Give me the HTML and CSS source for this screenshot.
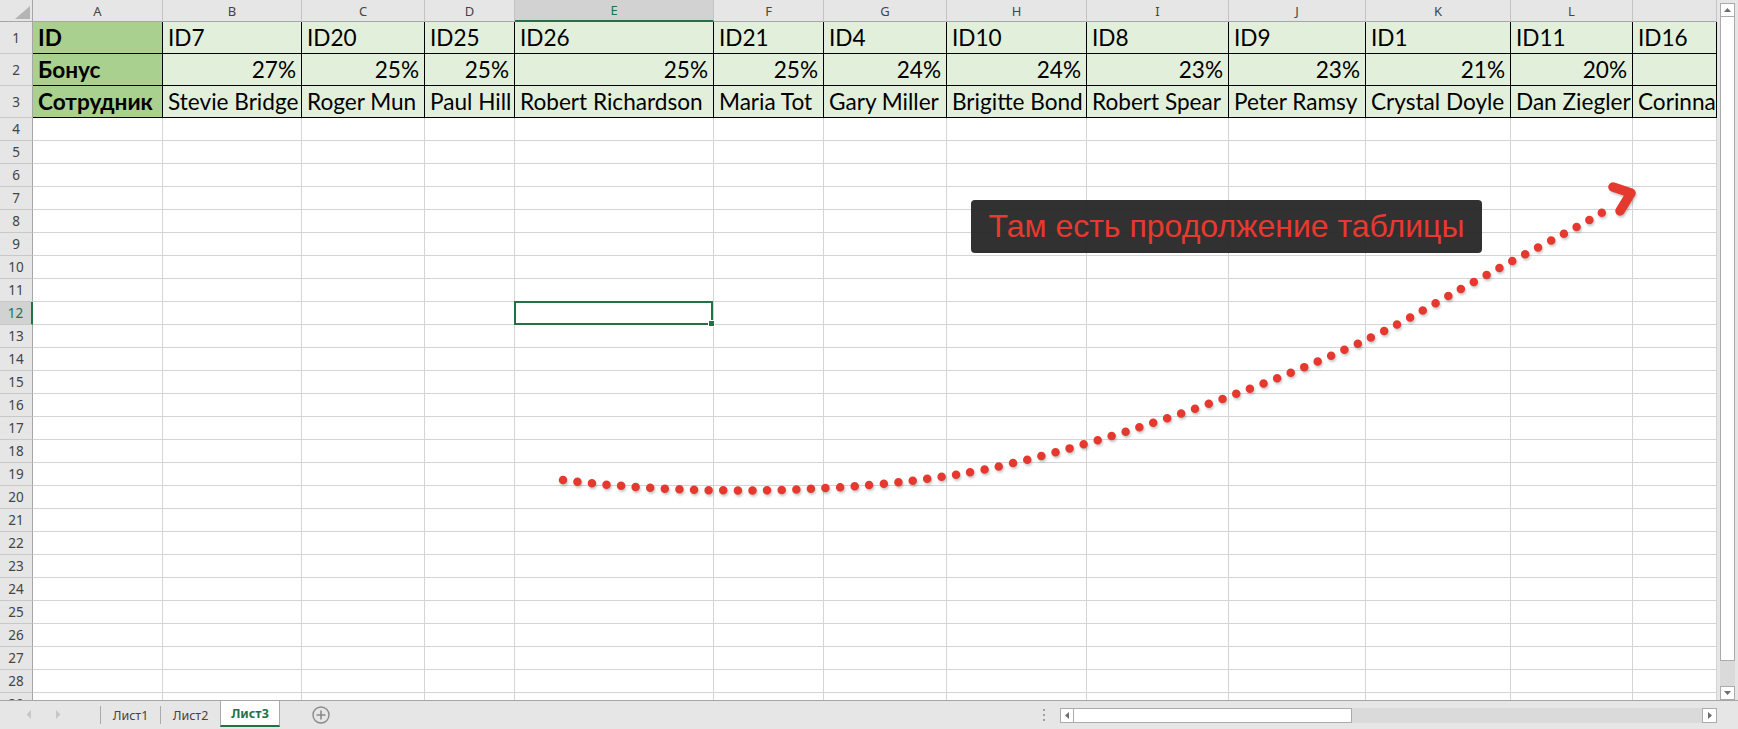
FILE: index.html
```html
<!DOCTYPE html>
<html lang="ru">
<head>
<meta charset="utf-8">
<title>Лист3</title>
<link rel="stylesheet" href="styles.css">
</head>
<body>
<div class="app">
  <div class="main">
    <div class="sheet">
      <div class="corner"><svg width="33" height="22" viewBox="0 0 33 22"><polygon points="15,19 30,19 30,6" fill="#b4b4b4"/></svg></div>
      <div class="ch">A</div><div class="ch">B</div><div class="ch">C</div><div class="ch">D</div><div class="ch on">E</div><div class="ch">F</div><div class="ch">G</div><div class="ch">H</div><div class="ch">I</div><div class="ch">J</div><div class="ch">K</div><div class="ch">L</div><div class="ch"></div>

      <div class="rh">1</div>
      <div class="c key">ID</div><div class="c">ID7</div><div class="c">ID20</div><div class="c">ID25</div><div class="c">ID26</div><div class="c">ID21</div><div class="c">ID4</div><div class="c">ID10</div><div class="c">ID8</div><div class="c">ID9</div><div class="c">ID1</div><div class="c">ID11</div><div class="c">ID16</div>

      <div class="rh">2</div>
      <div class="c key">Бонус</div><div class="c num">27%</div><div class="c num">25%</div><div class="c num">25%</div><div class="c num">25%</div><div class="c num">25%</div><div class="c num">24%</div><div class="c num">24%</div><div class="c num">23%</div><div class="c num">23%</div><div class="c num">21%</div><div class="c num">20%</div><div class="c num"></div>

      <div class="rh">3</div>
      <div class="c key">Сотрудник</div><div class="c">Stevie Bridge</div><div class="c">Roger Mun</div><div class="c">Paul Hill</div><div class="c">Robert Richardson</div><div class="c">Maria Tot</div><div class="c">Gary Miller</div><div class="c">Brigitte Bond</div><div class="c">Robert Spear</div><div class="c">Peter Ramsy</div><div class="c">Crystal Doyle</div><div class="c">Dan Ziegler</div><div class="c">Corinna</div>

      <div class="rh">4</div><div></div><div></div><div></div><div></div><div></div><div></div><div></div><div></div><div></div><div></div><div></div><div></div><div></div>
      <div class="rh">5</div><div></div><div></div><div></div><div></div><div></div><div></div><div></div><div></div><div></div><div></div><div></div><div></div><div></div>
      <div class="rh">6</div><div></div><div></div><div></div><div></div><div></div><div></div><div></div><div></div><div></div><div></div><div></div><div></div><div></div>
      <div class="rh">7</div><div></div><div></div><div></div><div></div><div></div><div></div><div></div><div></div><div></div><div></div><div></div><div></div><div></div>
      <div class="rh">8</div><div></div><div></div><div></div><div></div><div></div><div></div><div></div><div></div><div></div><div></div><div></div><div></div><div></div>
      <div class="rh">9</div><div></div><div></div><div></div><div></div><div></div><div></div><div></div><div></div><div></div><div></div><div></div><div></div><div></div>
      <div class="rh">10</div><div></div><div></div><div></div><div></div><div></div><div></div><div></div><div></div><div></div><div></div><div></div><div></div><div></div>
      <div class="rh">11</div><div></div><div></div><div></div><div></div><div></div><div></div><div></div><div></div><div></div><div></div><div></div><div></div><div></div>
      <div class="rh on">12</div><div></div><div></div><div></div><div></div><div class="cur"><span class="cursor"><span class="handle"></span></span></div><div></div><div></div><div></div><div></div><div></div><div></div><div></div><div></div>
      <div class="rh">13</div><div></div><div></div><div></div><div></div><div></div><div></div><div></div><div></div><div></div><div></div><div></div><div></div><div></div>
      <div class="rh">14</div><div></div><div></div><div></div><div></div><div></div><div></div><div></div><div></div><div></div><div></div><div></div><div></div><div></div>
      <div class="rh">15</div><div></div><div></div><div></div><div></div><div></div><div></div><div></div><div></div><div></div><div></div><div></div><div></div><div></div>
      <div class="rh">16</div><div></div><div></div><div></div><div></div><div></div><div></div><div></div><div></div><div></div><div></div><div></div><div></div><div></div>
      <div class="rh">17</div><div></div><div></div><div></div><div></div><div></div><div></div><div></div><div></div><div></div><div></div><div></div><div></div><div></div>
      <div class="rh">18</div><div></div><div></div><div></div><div></div><div></div><div></div><div></div><div></div><div></div><div></div><div></div><div></div><div></div>
      <div class="rh">19</div><div></div><div></div><div></div><div></div><div></div><div></div><div></div><div></div><div></div><div></div><div></div><div></div><div></div>
      <div class="rh">20</div><div></div><div></div><div></div><div></div><div></div><div></div><div></div><div></div><div></div><div></div><div></div><div></div><div></div>
      <div class="rh">21</div><div></div><div></div><div></div><div></div><div></div><div></div><div></div><div></div><div></div><div></div><div></div><div></div><div></div>
      <div class="rh">22</div><div></div><div></div><div></div><div></div><div></div><div></div><div></div><div></div><div></div><div></div><div></div><div></div><div></div>
      <div class="rh">23</div><div></div><div></div><div></div><div></div><div></div><div></div><div></div><div></div><div></div><div></div><div></div><div></div><div></div>
      <div class="rh">24</div><div></div><div></div><div></div><div></div><div></div><div></div><div></div><div></div><div></div><div></div><div></div><div></div><div></div>
      <div class="rh">25</div><div></div><div></div><div></div><div></div><div></div><div></div><div></div><div></div><div></div><div></div><div></div><div></div><div></div>
      <div class="rh">26</div><div></div><div></div><div></div><div></div><div></div><div></div><div></div><div></div><div></div><div></div><div></div><div></div><div></div>
      <div class="rh">27</div><div></div><div></div><div></div><div></div><div></div><div></div><div></div><div></div><div></div><div></div><div></div><div></div><div></div>
      <div class="rh">28</div><div></div><div></div><div></div><div></div><div></div><div></div><div></div><div></div><div></div><div></div><div></div><div></div><div></div>
      <div class="rh">29</div><div></div><div></div><div></div><div></div><div></div><div></div><div></div><div></div><div></div><div></div><div></div><div></div><div></div>
    </div>
    <div class="vscroll">
      <div class="vbtn"><svg width="13" height="12" viewBox="0 0 13 12"><polygon points="3,8 10,8 6.5,4" fill="#6d6d6d"/></svg></div>
      <div class="vthumb"></div>
      <div class="vtrack"></div>
      <div class="vbtn"><svg width="13" height="12" viewBox="0 0 13 12"><polygon points="3,4 10,4 6.5,8" fill="#6d6d6d"/></svg></div>
    </div>
  </div>
  <div class="bottom">
    <div class="nav">
      <svg width="100" height="28" viewBox="0 0 100 28"><polygon points="31,9 31,18 26.5,13.5" fill="#c6c6c6"/><polygon points="56,9 56,18 60.5,13.5" fill="#c6c6c6"/></svg>
    </div>
    <div class="tab">Лист1</div>
    <div class="tab">Лист2</div>
    <div class="tab active">Лист3</div>
    <div class="add"><svg width="20" height="20" viewBox="0 0 20 20"><circle cx="10" cy="10" r="8" fill="none" stroke="#8a8a8a" stroke-width="1.4"/><path d="M10 5.5v9M5.5 10h9" stroke="#8a8a8a" stroke-width="1.6"/></svg></div>
    <div class="hscroll">
      <div class="split"><svg width="16" height="16" viewBox="0 0 16 16"><rect x="7" y="2" width="2" height="2" fill="#a0a0a0"/><rect x="7" y="7" width="2" height="2" fill="#a0a0a0"/><rect x="7" y="12" width="2" height="2" fill="#a0a0a0"/></svg></div>
      <div class="hbtn"><svg width="12" height="13" viewBox="0 0 12 13"><polygon points="8,3 8,10 4,6.5" fill="#6d6d6d"/></svg></div>
      <div class="hthumb"></div>
      <div class="htrack"></div>
      <div class="hbtn right"><svg width="13" height="13" viewBox="0 0 13 13"><polygon points="5,3 5,10 9,6.5" fill="#6d6d6d"/></svg></div>
    </div>
  </div>
  <div class="callout">Там есть продолжение таблицы</div>
  <svg class="arrow" width="1738" height="729" viewBox="0 0 1738 729">
    <path class="dots" d="M563,480 C700,497 850,492 960,474 S1300,380 1420,312 S1560,238 1608,209"/>
    <path class="head" d="M1613,187 L1631,193 L1620,211"/>
  </svg>
</div>
</body>
</html>
```

FILE: styles.css
```css
* { box-sizing: border-box; }
html, body { margin: 0; padding: 0; }
body {
  width: 1738px;
  height: 729px;
  overflow: hidden;
  background: #ffffff;
  font-family: Lato, "Noto Sans", sans-serif;
  color: #000;
}
.app { position: relative; width: 1738px; height: 729px; }
.main { display: flex; height: 700px; }

.sheet {
  display: grid;
  grid-template-columns: 33px 130px 139px 123px 90px 199px 110px 123px 140px 142px 137px 145px 122px 84px;
  grid-template-rows: 22px 32px 32px 32px;
  grid-auto-rows: 23px;
  width: 1717px;
  height: 700px;
  overflow: hidden;
}
.sheet > div {
  border-right: 1px solid #d4d4d4;
  border-bottom: 1px solid #d4d4d4;
}
.sheet > .corner {
  background: #e6e6e6;
  border-right-color: #a6a6a6;
  border-bottom-color: #a6a6a6;
}
.corner svg { display: block; }
.sheet > .ch {
  background: #e6e6e6;
  border-right-color: #c4c4c4;
  border-bottom-color: #a6a6a6;
  font-family: "Noto Sans", sans-serif;
  font-size: 13px;
  color: #444;
  display: flex;
  align-items: center;
  justify-content: center;
}
.sheet > .ch.on {
  background: #d2d2d2;
  color: #217346;
  border-bottom: 2px solid #217346;
}
.sheet > .rh {
  background: #e6e6e6;
  border-right-color: #a6a6a6;
  border-bottom-color: #c8c8c8;
  font-family: "Noto Sans", sans-serif;
  font-size: 13.5px;
  color: #444;
  display: flex;
  align-items: center;
  justify-content: center;
}
.sheet > .rh.on {
  background: #d2d2d2;
  color: #217346;
  border-right: 2px solid #217346;
}
.sheet > .c {
  background: #e2efda;
  border-right-color: #000;
  border-bottom-color: #000;
  display: flex;
  align-items: flex-end;
  padding: 0 5px 4px 5px;
  font-size: 22.6px;
  line-height: 22px;
  white-space: nowrap;
  overflow: hidden;
}
.sheet > .c.key { background: #a9d08e; font-weight: 700; }
.sheet > .c.num { justify-content: flex-end; }

.cur { position: relative; }
.cursor {
  position: absolute;
  left: -1px;
  top: -1px;
  right: 0;
  bottom: -1px;
  border: 2px solid #217346;
}
.handle {
  position: absolute;
  right: -4px;
  bottom: -4px;
  width: 7px;
  height: 7px;
  background: #217346;
  border: 1px solid #fff;
}

.vscroll {
  width: 21px;
  background: #e6e6e6;
  display: flex;
  flex-direction: column;
  padding: 3px 3px 0 3px;
}
.vbtn {
  height: 14px;
  background: #fff;
  border: 1px solid #ababab;
  display: flex;
  align-items: center;
  justify-content: center;
}
.vbtn svg { display: block; }
.vthumb {
  flex: 1;
  background: #fff;
  border: 1px solid #ababab;
  border-top: none;
}
.vtrack { height: 25px; background: #dadada; }

.bottom {
  height: 29px;
  border-top: 1px solid #a6a6a6;
  background: #e6e6e6;
  display: flex;
  align-items: center;
  padding-right: 21px;
  font-family: "Noto Sans", sans-serif;
  font-size: 12.5px;
  color: #444;
}
.nav { width: 100px; height: 28px; }
.nav svg { display: block; }
.tab {
  width: 60px;
  height: 18px;
  border-left: 1px solid #ababab;
  display: flex;
  align-items: center;
  justify-content: center;
}
.tab.active {
  align-self: flex-start;
  height: 26px;
  background: #fff;
  border-right: 1px solid #ababab;
  border-bottom: 2px solid #217346;
  color: #217346;
  font-weight: 700;
}
.add { margin-left: 31px; display: flex; }
.add svg { display: block; }
.hscroll {
  margin-left: auto;
  width: 681px;
  height: 15px;
  display: flex;
}
.split { width: 16px; margin-right: 8px; display: flex; align-items: center; }
.split svg { display: block; }
.hbtn {
  width: 14px;
  background: #fff;
  border: 1px solid #ababab;
  display: flex;
  align-items: center;
  justify-content: center;
}
.hbtn.right { width: 15px; }
.hbtn svg { display: block; }
.hthumb {
  width: 278px;
  background: #fff;
  border: 1px solid #ababab;
  border-left: none;
}
.htrack { flex: 1; background: #dadada; }

.callout {
  position: absolute;
  left: 971px;
  top: 200px;
  width: 511px;
  height: 53px;
  border-radius: 4px;
  background: rgba(38, 38, 38, 0.95);
  color: #e8392e;
  font-family: "Liberation Sans", Arial, sans-serif;
  font-size: 32px;
  display: flex;
  align-items: center;
  justify-content: center;
  white-space: nowrap;
}
.arrow {
  position: absolute;
  left: 0;
  top: 0;
  pointer-events: none;
  filter: drop-shadow(1.5px 2px 1px rgba(0, 0, 0, 0.22));
}
.dots {
  fill: none;
  stroke: #e5392f;
  stroke-width: 8.5;
  stroke-linecap: round;
  stroke-dasharray: 0 14.6;
}
.head {
  fill: none;
  stroke: #e5392f;
  stroke-width: 9.5;
  stroke-linecap: round;
  stroke-linejoin: round;
}
```
